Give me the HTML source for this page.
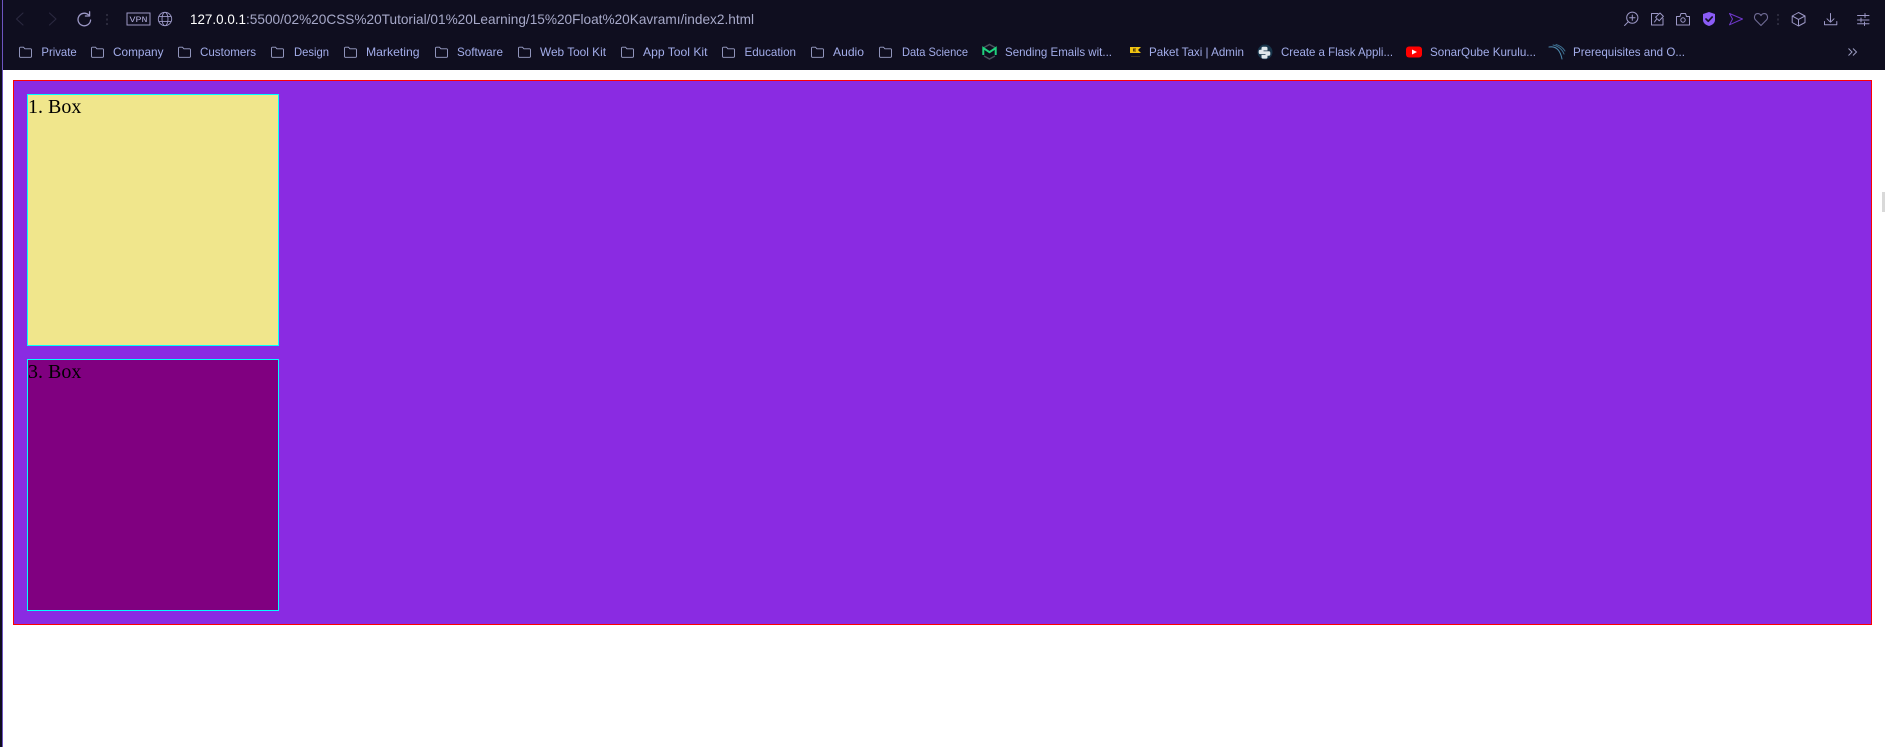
<!DOCTYPE html>
<html lang="en">
<head>
<meta charset="utf-8">
<title>Float</title>
<style>
html,body{margin:0;padding:0;width:1885px;height:747px;overflow:hidden;background:#fff}
#wrap{position:relative;width:1885px;height:747px;overflow:hidden}
#chrome{position:absolute;left:0;top:0;width:1885px;height:70px;display:block}
#strip{position:absolute;left:0;top:70px;width:2px;height:677px;background:#0e0d1e}
#strip2{position:absolute;left:2px;top:0;width:1px;height:747px;background:#6d55c0}
#box{position:absolute;left:13px;top:80px;width:1857px;height:543px;background:#8a2be2;border:1px solid #f00}
.b{position:absolute;left:13px;width:250px;height:250px;border:1px solid #0ff;font:20px/25px "Liberation Serif",serif;color:#000}
#thumb{position:absolute;left:1882px;top:192px;width:3px;height:20px;background:#d9d9d9}
</style>
</head>
<body>
<div id="wrap">
<svg id="chrome" width="1885" height="70" viewBox="0 0 1885 70" xmlns="http://www.w3.org/2000/svg">
<defs>
<path id="f" d="M0.5 2.2 a1 1 0 0 1 1-1 h3 l1.4 1.6 h5.6 a1 1 0 0 1 1 1 v6.5 a1 1 0 0 1-1 1 h-10 a1 1 0 0 1-1-1 z" fill="none" stroke="#9fa3cc" stroke-width="0.9"/>
</defs>
<rect width="1885" height="70" fill="#0f0e1f"/>

<g fill="none" stroke-linecap="round" stroke-linejoin="round">
<path d="M23 13 L16.5 19 L23 25" stroke="#2b2940" stroke-width="1.1"/>
<path d="M49.5 13 L56 19 L49.5 25" stroke="#2b2940" stroke-width="1.1"/>
<path d="M88.5 14.8 A6.3 6.3 0 1 0 90.6 20" stroke="#9c98c6" stroke-width="1.3"/>
<path d="M89.6 11.8 V16 H85.4" stroke="#9c98c6" stroke-width="1.3"/>
</g>
<g fill="#2b2a3c"><rect x="106" y="14" width="2" height="2"/><rect x="106" y="18.5" width="2" height="2"/><rect x="106" y="23" width="2" height="2"/></g>
<rect x="127" y="13" width="23" height="12" fill="none" stroke="#9c98c6" stroke-width="1"/>
<text x="129.5" y="22" font-family="Liberation Mono, monospace" font-size="8.5" fill="#b0acd8" textLength="18" lengthAdjust="spacingAndGlyphs">VPN</text>
<g fill="none" stroke="#9c98c6" stroke-width="0.9">
<circle cx="165" cy="19" r="6.7"/><ellipse cx="165" cy="19" rx="3" ry="6.7"/>
<path d="M158.6 16.6 H171.4 M158.6 21.4 H171.4"/>
</g>

<text x="190" y="24" font-family="Liberation Sans, sans-serif" font-size="14" fill="#ffffff" textLength="56" lengthAdjust="spacingAndGlyphs">127.0.0.1</text>
<text x="246" y="24" font-family="Liberation Sans, sans-serif" font-size="14" fill="#a7a9c9" textLength="508" lengthAdjust="spacingAndGlyphs">:5500/02%20CSS%20Tutorial/01%20Learning/15%20Float%20Kavramı/index2.html</text>

<g fill="none" stroke="#9c98c6" stroke-width="1" stroke-linecap="round" stroke-linejoin="round">
<circle cx="1632.3" cy="17.7" r="5.6"/>
<path d="M1628.2 21.8 L1624.6 25.5 M1632.3 15 V20.4 M1629.6 17.7 H1635"/>
<path d="M1658 13.5 H1651.5 V25 H1663 V18.5"/>
<path d="M1654.5 22 L1657 18.6 L1655.6 17.2 L1660 13 L1663.4 16.4 L1659.2 20.8 L1657.8 19.4"/>
<path d="M1676.5 16.5 H1680 L1681 13.5 H1685.5 L1686.5 16.5 H1689.5 V25 H1676.5 Z"/>
<circle cx="1683" cy="20" r="2.2"/>
</g>
<path d="M1709 12 L1715 14 V20 C1715 23.2 1712 25.2 1709 26 C1706 25.2 1703 23.2 1703 20 V14 Z" fill="#8b5cf6"/>
<path d="M1706 19 L1708.3 21.2 L1712.2 17" fill="none" stroke="#17132b" stroke-width="1.7" stroke-linecap="round" stroke-linejoin="round"/>
<path d="M1729.5 13.5 L1742.5 19 L1729.5 24.8 L1732.5 19 Z" fill="none" stroke="#7038cc" stroke-width="1" stroke-linejoin="round"/>
<path d="M1761 25.5 L1755.6 20 C1753.4 17.6 1754.6 13.6 1757.8 13.6 C1759.3 13.6 1760.4 14.5 1761 15.6 C1761.6 14.5 1762.7 13.6 1764.2 13.6 C1767.4 13.6 1768.6 17.6 1766.4 20 Z" fill="none" stroke="#6f6b94" stroke-width="1.1" stroke-linejoin="round"/>
<g fill="#2b2a3c"><rect x="1777" y="14" width="2" height="2"/><rect x="1777" y="18.5" width="2" height="2"/><rect x="1777" y="23" width="2" height="2"/></g>
<g fill="none" stroke="#9c98c6" stroke-width="1" stroke-linejoin="round" stroke-linecap="round">
<path d="M1798.5 12.5 L1805 16 V22.5 L1798.5 26 L1792.2 22.5 V16 Z M1792.2 16 L1798.5 19.4 L1805 16 M1798.5 19.4 V26"/>
<path d="M1830.5 13.5 V22 M1827 18.8 L1830.5 22.2 L1834 18.8 M1824.5 21.5 V24.8 H1836.8 V21.5"/>
<path d="M1857.5 15.5 H1869 M1857.5 20 H1869 M1857.5 23.8 H1869 M1865 13.5 V17.5 M1861 18 V22 M1864.5 22 V25.5"/>
</g>

<!-- bookmarks -->
<g font-family="Liberation Sans, sans-serif" font-size="12" fill="#a3adea">
<use href="#f" x="19" y="46"/><text x="41.4" y="56" textLength="35.3" lengthAdjust="spacingAndGlyphs">Private</text>
<use href="#f" x="91" y="46"/><text x="113" y="56" textLength="50.5" lengthAdjust="spacingAndGlyphs">Company</text>
<use href="#f" x="178" y="46"/><text x="200" y="56" textLength="56" lengthAdjust="spacingAndGlyphs">Customers</text>
<use href="#f" x="271" y="46"/><text x="294" y="56" textLength="35" lengthAdjust="spacingAndGlyphs">Design</text>
<use href="#f" x="344" y="46"/><text x="366" y="56" textLength="53.5" lengthAdjust="spacingAndGlyphs">Marketing</text>
<use href="#f" x="435" y="46"/><text x="457" y="56" textLength="46" lengthAdjust="spacingAndGlyphs">Software</text>
<use href="#f" x="518" y="46"/><text x="540" y="56" textLength="66" lengthAdjust="spacingAndGlyphs">Web Tool Kit</text>
<use href="#f" x="621" y="46"/><text x="643" y="56" textLength="64.5" lengthAdjust="spacingAndGlyphs">App Tool Kit</text>
<use href="#f" x="722" y="46"/><text x="744.5" y="56" textLength="51.5" lengthAdjust="spacingAndGlyphs">Education</text>
<use href="#f" x="811" y="46"/><text x="833" y="56" textLength="31" lengthAdjust="spacingAndGlyphs">Audio</text>
<use href="#f" x="879" y="46"/><text x="902" y="56" textLength="66" lengthAdjust="spacingAndGlyphs">Data Science</text>
<text x="1005" y="56" textLength="107" lengthAdjust="spacingAndGlyphs">Sending Emails wit...</text>
<text x="1149" y="56" textLength="95" lengthAdjust="spacingAndGlyphs">Paket Taxi | Admin</text>
<text x="1281" y="56" textLength="112" lengthAdjust="spacingAndGlyphs">Create a Flask Appli...</text>
<text x="1430" y="56" textLength="106" lengthAdjust="spacingAndGlyphs">SonarQube Kurulu...</text>
<text x="1573" y="56" textLength="112" lengthAdjust="spacingAndGlyphs">Prerequisites and O...</text>
</g>

<!-- favicons -->
<path d="M984 47.5 L989.5 44.5 L995 47.5 M984 56 L989.5 59 L995 56" fill="none" stroke="#4a4f5c" stroke-width="1.5"/>
<path d="M983.3 55 V48 L989.5 52.2 L995.7 48 V55" fill="none" stroke="#1fd17e" stroke-width="2"/>
<path d="M1130 47 H1141 L1138 50 L1141 53 H1130 Z" fill="#f2c511"/>
<path d="M1133 48.5 h3 v1 h-1.5 v1 h1.5 v1 h-3 z" fill="#5a4308"/>
<rect x="1131" y="56" width="9" height="1" fill="#3a3420"/>
<circle cx="1265" cy="52" r="7.5" fill="#17344a"/>
<path d="M1263 46.8 h3 a1.5 1.5 0 0 1 1.5 1.5 v2.2 h-4 v.8 h5.8 a1.5 1.5 0 0 1 1 1.4 v1.5 a1.5 1.5 0 0 1-1.5 1.5 h-1.3 v1.4 a1.5 1.5 0 0 1-1.5 1.5 h-3 a1.5 1.5 0 0 1-1.5-1.5 v-2.2 h4 v-.8 h-5.7 a1.4 1.4 0 0 1-1.1-1.4 v-1.5 a1.5 1.5 0 0 1 1.5-1.5 h1.3 v-1.4 a1.5 1.5 0 0 1 1.5-1.5z" fill="#dfe7ec"/>
<rect x="1406" y="46.5" width="16" height="11" rx="3" fill="#f00"/>
<path d="M1412 49.5 L1417 52 L1412 54.5 Z" fill="#fff"/>
<g fill="none" stroke-width="1" stroke-linecap="round">
<path d="M1549 47 C1555 46 1560 49 1562 59" stroke="#4d87ab"/>
<path d="M1553 45 C1558 46 1562 49 1564 54" stroke="#3d6f90"/>
<path d="M1556 44.5 C1560 45.5 1563 48 1565 51" stroke="#3d6f90"/>
</g>
<path d="M1848.5 48.5 L1852 52 L1848.5 55.5 M1853 48.5 L1856.5 52 L1853 55.5" fill="none" stroke="#9b9cc0" stroke-width="1"/>
</svg>
<div id="strip"></div>
<div id="strip2"></div>
<div id="box">
<div class="b" style="top:13px;background:#f0e68c">1. Box</div>
<div class="b" style="top:278px;background:#800080">3. Box</div>
</div>
<div id="thumb"></div>
</div>
</body>
</html>
